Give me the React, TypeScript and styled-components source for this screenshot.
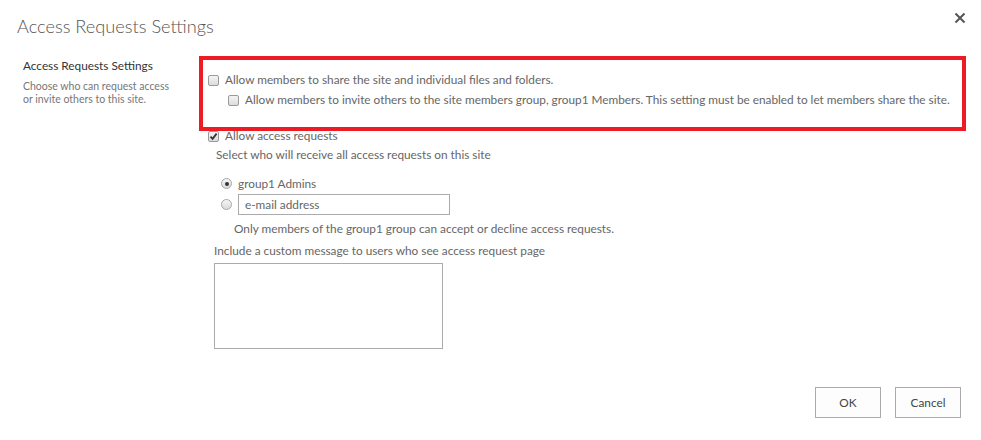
import React from "react";
import styled, { createGlobalStyle } from "styled-components";

const Global = createGlobalStyle`
  html, body { margin: 0; padding: 0; background: #fff; }
  body { font-family: "Lato", "Open Sans", sans-serif; color: #444; }
  * { box-sizing: border-box; }
`;

const Dialog = styled.div`
  width: 981px;
  height: 440px;
  display: flex;
  flex-direction: column;
  background: #fff;
`;

const Header = styled.div`
  display: flex;
  justify-content: space-between;
  align-items: center;
  height: 52px;
  padding: 0 13px 0 17px;
`;

const Title = styled.h1`
  margin: 0;
  font-size: 18.2px;
  font-weight: 300;
  color: #555;
`;

const Close = styled.button`
  border: 0;
  background: none;
  padding: 0;
  width: 14px;
  height: 14px;
  display: flex;
  margin-top: -14px;
`;

const Body = styled.div`
  display: grid;
  grid-template-columns: 199px 1fr;
  flex: 1;
`;

const Side = styled.div`
  padding: 6px 0 0 23px;
`;

const SideTitle = styled.div`
  font-size: 11.8px;
  color: #333;
  line-height: 16px;
  margin-bottom: 6px;
`;

const SideDesc = styled.div`
  font-size: 10.5px;
  line-height: 13px;
  color: #777;
`;

const Main = styled.div`
  display: flex;
  flex-direction: column;
  padding-right: 16px;
`;

const Highlight = styled.div`
  width: 767px;
  height: 75px;
  border: 4px solid #ed1c24;
  padding: 13px 0 0 5px;
  margin-top: 4px;
  display: flex;
  flex-direction: column;
  gap: 6px;
`;

const Row = styled.label<{ $indent?: number; $top?: number }>`
  display: flex;
  align-items: center;
  gap: 6px;
  padding-left: ${(p) => p.$indent ?? 0}px;
  margin-top: ${(p) => p.$top ?? 0}px;
  font-size: 11.8px;
  line-height: 14px;
  color: #666;
  white-space: nowrap;
`;

const Box = styled.span`
  width: 11px;
  height: 11px;
  border: 1px solid #9a9a9a;
  border-radius: 2px;
  background: linear-gradient(#f4f4f4, #dcdcdc);
  display: inline-flex;
  align-items: center;
  justify-content: center;
  flex: none;
`;

const Radio = styled.span<{ $checked?: boolean }>`
  width: 11px;
  height: 11px;
  border: 1px solid #a8a8a8;
  border-radius: 50%;
  background: linear-gradient(#f6f6f6, #dadada);
  display: inline-flex;
  align-items: center;
  justify-content: center;
  flex: none;
  &::after {
    content: "";
    width: 4px;
    height: 4px;
    border-radius: 50%;
    background: ${(p) => (p.$checked ? "#333" : "transparent")};
  }
`;

const Text = styled.div<{ $indent?: number; $top?: number }>`
  padding-left: ${(p) => p.$indent ?? 0}px;
  margin-top: ${(p) => p.$top ?? 0}px;
  font-size: 11.8px;
  line-height: 14px;
  color: #666;
  white-space: nowrap;
`;

const RadioRow = styled.div<{ $top?: number }>`
  display: flex;
  align-items: center;
  gap: 6px;
  padding-left: 22px;
  margin-top: ${(p) => p.$top ?? 0}px;
  height: 21px;
  font-size: 11.8px;
  color: #666;
`;

const Input = styled.div`
  width: 212px;
  height: 21px;
  border: 1px solid #ababab;
  padding: 0 6px;
  display: flex;
  align-items: center;
  font-size: 11.8px;
  color: #666;
`;

const TextArea = styled.div`
  width: 229px;
  height: 86px;
  border: 1px solid #ababab;
  margin-left: 15px;
  margin-top: 5px;
`;

const Footer = styled.div`
  display: flex;
  justify-content: flex-end;
  gap: 14px;
  padding: 0 20px 22px 0;
`;

const Button = styled.button`
  width: 66px;
  height: 31px;
  border: 1px solid #ababab;
  background: #fdfdfd;
  font-family: inherit;
  font-size: 11.8px;
  color: #444;
  padding: 0;
`;

const Check = () => (
  <svg width="9" height="9" viewBox="0 0 9 9">
    <path d="M1.5 4.6 L3.6 6.8 L7.6 1.6" fill="none" stroke="#333" strokeWidth="1.8" />
  </svg>
);

export default function App() {
  return (
    <Dialog>
      <Global />
      <Header>
        <Title>Access Requests Settings</Title>
        <Close aria-label="Close">
          <svg width="12" height="12" viewBox="0 0 12 12">
            <path d="M1.5 1.5 L10.5 10.5 M10.5 1.5 L1.5 10.5" stroke="#555" strokeWidth="2" />
          </svg>
        </Close>
      </Header>
      <Body>
        <Side>
          <SideTitle>Access Requests Settings</SideTitle>
          <SideDesc>
            Choose who can request access
            <br />
            or invite others to this site.
          </SideDesc>
        </Side>
        <Main>
          <Highlight>
            <Row>
              <Box />
              Allow members to share the site and individual files and folders.
            </Row>
            <Row $indent={20}>
              <Box />
              Allow members to invite others to the site members group, group1 Members. This setting must be enabled to let members share the site.
            </Row>
          </Highlight>
          <Row $indent={9} $top={-2}>
            <Box>
              <Check />
            </Box>
            Allow access requests
          </Row>
          <Text $indent={17} $top={5}>Select who will receive all access requests on this site</Text>
          <RadioRow $top={11}>
            <Radio $checked />
            group1 Admins
          </RadioRow>
          <RadioRow $top={0}>
            <Radio />
            <Input>e-mail address</Input>
          </RadioRow>
          <Text $indent={35} $top={7}>Only members of the group1 group can accept or decline access requests.</Text>
          <Text $indent={15} $top={8}>Include a custom message to users who see access request page</Text>
          <TextArea />
        </Main>
      </Body>
      <Footer>
        <Button>OK</Button>
        <Button>Cancel</Button>
      </Footer>
    </Dialog>
  );
}
